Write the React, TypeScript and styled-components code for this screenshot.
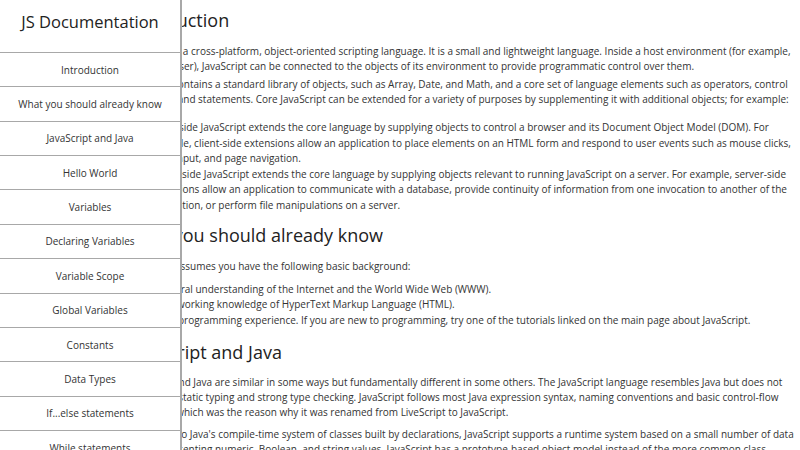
import React from "react";
import styled, { createGlobalStyle } from "styled-components";

const GlobalStyle = createGlobalStyle`
  html, body {
    margin: 0;
    padding: 0;
    background: #fff;
  }
  body {
    font-family: "Open Sans", "Noto Sans", sans-serif;
    color: #333;
  }
`;

const navLinks = [
  "Introduction",
  "What you should already know",
  "JavaScript and Java",
  "Hello World",
  "Variables",
  "Declaring Variables",
  "Variable Scope",
  "Global Variables",
  "Constants",
  "Data Types",
  "If...else statements",
  "While statements",
  "Function declarations",
  "Reference",
];

export default function App() {
  return (
    <>
      <GlobalStyle />
      <NavBar id="navbar">
        <NavHeader>JS Documentation</NavHeader>
        <NavList>
          {navLinks.map((link) => (
            <NavItem key={link}>
              <NavLink href={`#${link.replace(/ /g, "_")}`}>{link}</NavLink>
            </NavItem>
          ))}
        </NavList>
      </NavBar>

      <MainDoc id="main-doc">
        <Section id="Introduction">
          <SectionTitle>Introduction</SectionTitle>
          <Para gap={3.5}>
            JavaScript is a cross-platform, object-oriented scripting language. It is a small and lightweight
            language. Inside a host environment (for example, a web browser), JavaScript can be connected to the
            objects of its environment to provide programmatic control over them.
          </Para>
          <Para gap={13}>
            JavaScript contains a standard library of objects, such as Array, Date, and Math, and a core set of
            language elements such as operators, control structures, and statements. Core JavaScript can be extended
            for a variety of purposes by supplementing it with additional objects; for example:
          </Para>
          <List gap={4}>
            <li>
              Client-side JavaScript extends the core language by supplying objects to control a browser and its
              Document Object Model (DOM). For example, client-side extensions allow an application to place elements
              on an HTML form and respond to user events such as mouse clicks, form input, and page navigation.
            </li>
            <li>
              Server-side JavaScript extends the core language by supplying objects relevant to running JavaScript on
              a server. For example, server-side extensions allow an application to communicate with a database,
              provide continuity of information from one invocation to another of the application, or perform file
              manipulations on a server.
            </li>
          </List>
        </Section>

        <Section id="What_you_should_already_know">
          <SectionTitle>What you should already know</SectionTitle>
          <Para gap={8}>This guide assumes you have the following basic background:</Para>
          <List gap={5.5}>
            <li>A general understanding of the Internet and the World Wide Web (WWW).</li>
            <li>Good working knowledge of HyperText Markup Language (HTML).</li>
            <li>
              Some programming experience. If you are new to programming, try one of the tutorials linked on the
              main page about JavaScript.
            </li>
          </List>
        </Section>

        <Section id="JavaScript_and_Java">
          <SectionTitle>JavaScript and Java</SectionTitle>
          <Para gap={7}>
            JavaScript and Java are similar in some ways but fundamentally different in some others. The JavaScript
            language resembles Java but does not have Java's static typing and strong type checking. JavaScript
            follows most Java expression syntax, naming conventions and basic control-flow constructs which was the
            reason why it was renamed from LiveScript to JavaScript.
          </Para>
          <Para gap={7}>
            In contrast to Java's compile-time system of classes built by declarations, JavaScript supports a runtime
            system based on a small number of data types representing numeric, Boolean, and string values.
            JavaScript has a prototype-based object model instead of the more common class-based object model.
          </Para>
        </Section>
      </MainDoc>
    </>
  );
}

const NavBar = styled.nav`
  position: fixed;
  top: 0;
  left: 0;
  width: 180px;
  height: 100%;
  background: #fff;
  border-right: 2px solid #a8a8a8;
  overflow: hidden;
  z-index: 2;
`;

const NavHeader = styled.header`
  height: 52px;
  display: flex;
  align-items: center;
  justify-content: center;
  font-size: 16.5px;
  color: #222;
  padding-bottom: 9px;
  box-sizing: border-box;
`;

const NavList = styled.ul`
  list-style: none;
  margin: 0;
  padding: 0;
`;

const NavItem = styled.li`
  height: 34.36px;
  box-sizing: border-box;
  border-top: 1.5px solid #a8a8a8;
  display: flex;
  align-items: center;
  justify-content: center;
`;

const NavLink = styled.a`
  color: #333;
  font-size: 10px;
  text-decoration: none;
`;

const MainDoc = styled.main`
  padding: 2px 6px 0 125px;
`;

const Section = styled.section`
  display: flex;
  flex-direction: column;
`;

const SectionTitle = styled.header`
  font-size: 18px;
  line-height: 28px;
  margin: 4px 0 9.5px;
  color: #222;
`;

const Para = styled.p<{ gap: number }>`
  font-size: 10px;
  line-height: 15px;
  margin: 0 0 ${(props) => props.gap}px;
`;

const List = styled.ul<{ gap: number }>`
  font-size: 10px;
  line-height: 15.5px;
  margin: 0 0 ${(props) => props.gap}px;
  padding-left: 24px;
`;
